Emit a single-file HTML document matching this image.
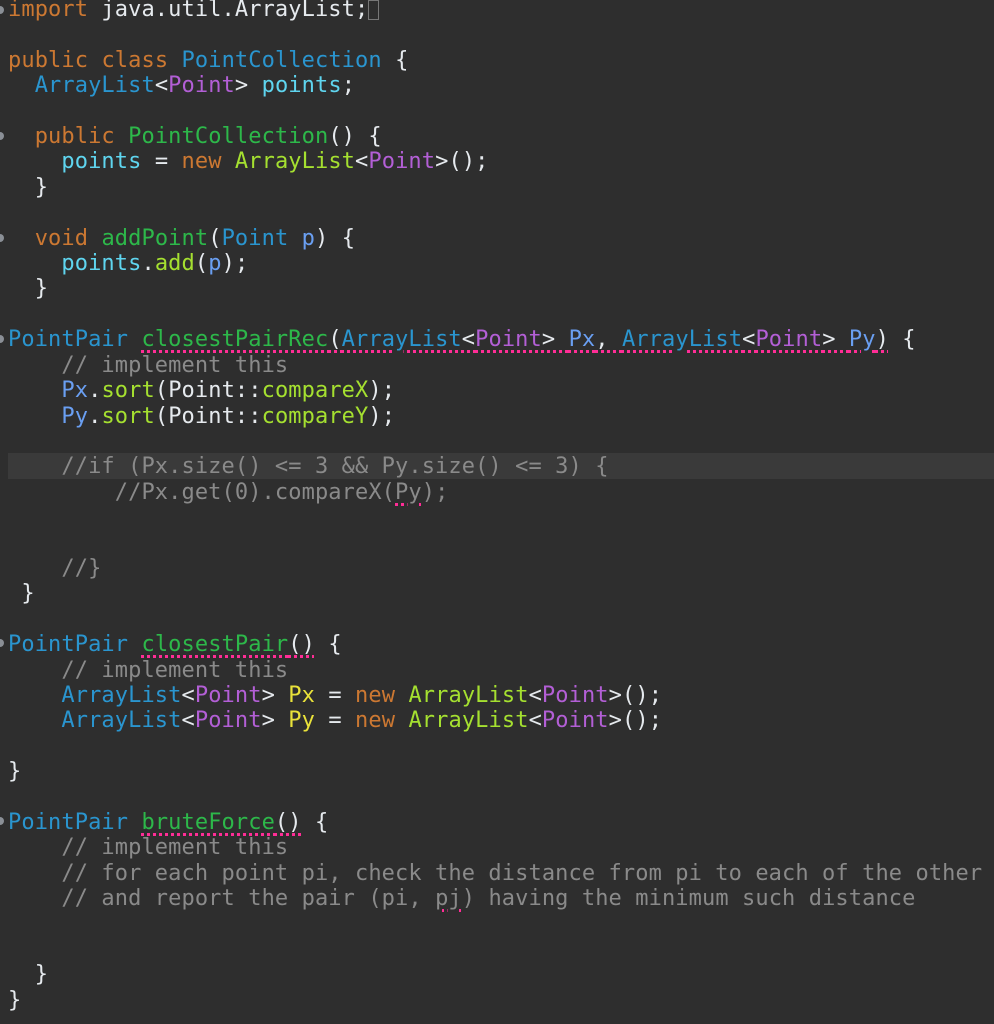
<!DOCTYPE html>
<html><head><style>
html,body{margin:0;padding:0;background:#2e2e2e;width:994px;height:1024px;overflow:hidden}
pre{margin:0;position:absolute;left:8px;top:-3px;font-family:"DejaVu Sans Mono","Liberation Mono",monospace;font-size:22px;letter-spacing:0.1px;line-height:25.4px;color:#e6eaee;white-space:pre}
.k{color:#cc7832}.c{color:#2a95cf}.t{color:#b35fd6}.f{color:#5fd5ef}.m{color:#2db84a}.g{color:#a5e030}.v{color:#6a9ff2}.y{color:#e9e23a}.cm{color:#8a8a8a}
.s{text-decoration:underline dotted #ff2d96;text-underline-offset:4px;text-decoration-thickness:3px}
.hl{position:absolute;left:8px;top:453px;width:986px;height:26px;background:#3a3a3a}
.d{position:absolute;left:-4px;width:8px;height:8px;border-radius:50%;background:#8a8f96}
.box{display:inline-block;width:11px;height:20px;border:1px solid #777;vertical-align:-4px;box-sizing:border-box}
</style></head><body>
<div class="hl"></div>
<div class="d" style="top:6px"></div>
<div class="d" style="top:132px"></div>
<div class="d" style="top:234px"></div>
<div class="d" style="top:335px"></div>
<div class="d" style="top:639px"></div>
<div class="d" style="top:817px"></div>
<pre><span class="k">import</span> java.util.ArrayList;<span class="box"></span>

<span class="k">public</span> <span class="k">class</span> <span class="c">PointCollection</span> {
  <span class="c">ArrayList</span>&lt;<span class="t">Point</span>&gt; <span class="f">points</span>;

  <span class="k">public</span> <span class="m">PointCollection</span>() {
    <span class="f">points</span> = <span class="k">new</span> <span class="g">ArrayList</span>&lt;<span class="t">Point</span>&gt;();
  }

  <span class="k">void</span> <span class="m">addPoint</span>(<span class="c">Point</span> <span class="v">p</span>) {
    <span class="f">points</span>.<span class="g">add</span>(<span class="v">p</span>);
  }

<span class="c">PointPair</span> <span class="s"><span class="m">closestPairRec</span>(<span class="c">ArrayList</span>&lt;<span class="t">Point</span>&gt; <span class="v">Px</span>, <span class="c">ArrayList</span>&lt;<span class="t">Point</span>&gt; <span class="v">Py</span>)</span> {
    <span class="cm">// implement this</span>
    <span class="v">Px</span>.<span class="g">sort</span>(Point::<span class="g">compareX</span>);
    <span class="v">Py</span>.<span class="g">sort</span>(Point::<span class="g">compareY</span>);

    <span class="cm">//if (Px.size() &lt;= 3 &amp;&amp; Py.size() &lt;= 3) {</span>
        <span class="cm">//Px.get(0).compareX(<span class="s">Py</span>);</span>


    <span class="cm">//}</span>
 }

<span class="c">PointPair</span> <span class="s"><span class="m">closestPair</span>()</span> {
    <span class="cm">// implement this</span>
    <span class="c">ArrayList</span>&lt;<span class="t">Point</span>&gt; <span class="y">Px</span> = <span class="k">new</span> <span class="g">ArrayList</span>&lt;<span class="t">Point</span>&gt;();
    <span class="c">ArrayList</span>&lt;<span class="t">Point</span>&gt; <span class="y">Py</span> = <span class="k">new</span> <span class="g">ArrayList</span>&lt;<span class="t">Point</span>&gt;();

}

<span class="c">PointPair</span> <span class="s"><span class="m">bruteForce</span>()</span> {
    <span class="cm">// implement this</span>
    <span class="cm">// for each point pi, check the distance from pi to each of the other</span>
    <span class="cm">// and report the pair (pi, <span class="s">pj</span>) having the minimum such distance</span>


  }
}</pre>
</body></html>
